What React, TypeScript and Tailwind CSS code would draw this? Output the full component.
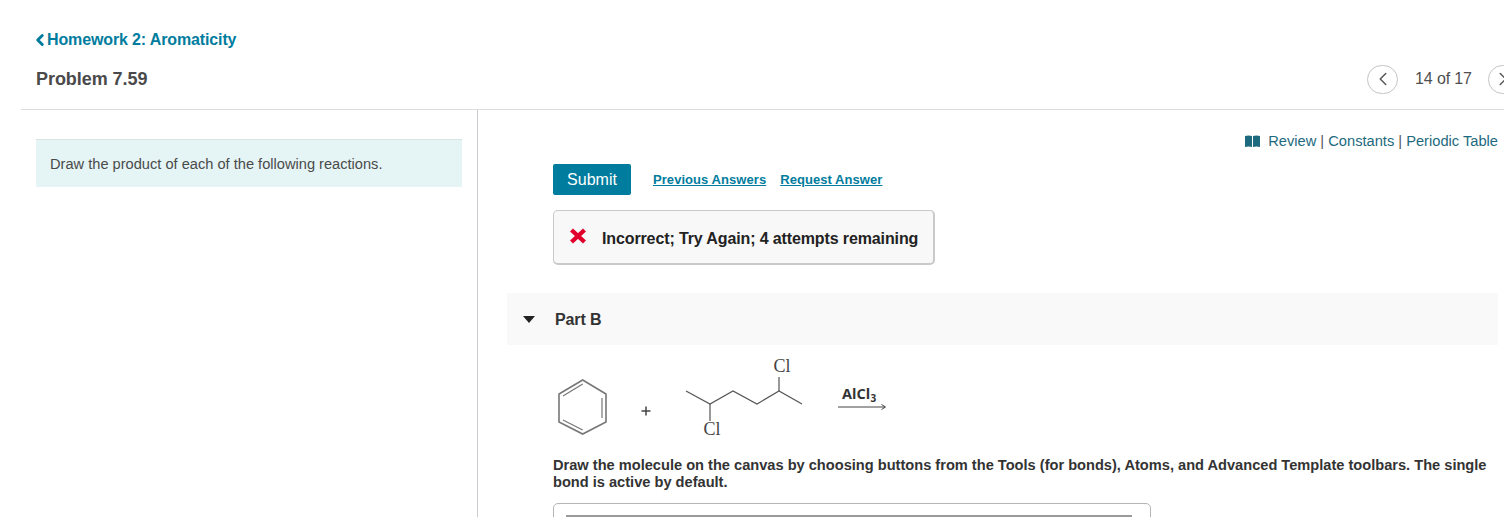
import { ChevronLeft, ChevronRight } from "lucide-react";

function Reaction() {
    return (
        <svg width="340" height="88" viewBox="553 352 340 88" className="block" fill="none">
            {/* benzene */}
            <g stroke="#777" strokeWidth="1.6">
                <path d="M582.7 380 L606 394 L606 422 L582.7 434 L559 422 L559 394 Z" />
                <path d="M602 398 L602 418 M563 396 L582.7 384 M563 420 L582.7 430" strokeWidth="1.2" />
            </g>
            <path d="M646 406.5 V415.5 M641.5 411 H650.5" stroke="#444" strokeWidth="1.5" />
            {/* dichlorohexane */}
            <g stroke="#555" strokeWidth="1.2">
                <path d="M686 391 L710 404 L733 391 L757 404 L779 391 L802 404" />
                <path d="M710 404 V421 M779 391 V377" />
            </g>
            <text x="782" y="372" textAnchor="middle" fontFamily="'Liberation Serif', serif" fontSize="18" fill="#444">Cl</text>
            <text x="712" y="435" textAnchor="middle" fontFamily="'Liberation Serif', serif" fontSize="18" fill="#444">Cl</text>
            <text x="842" y="399" fontFamily="'Open Sans', sans-serif" fontSize="14.5" fontWeight="700" fill="#333">AlCl</text>
            <text x="870.5" y="402" fontFamily="'Open Sans', sans-serif" fontSize="10" fontWeight="700" fill="#333">3</text>
            <path d="M838 407 H885 M881.5 404.5 L885.5 407 L881.5 409.5" stroke="#444" strokeWidth="1" />
        </svg>
    );
}

export default function App() {
    return (
        <div className="w-[1504px] h-[517px] overflow-hidden bg-white font-['Liberation_Sans',Arial,sans-serif]">
            {/* Header */}
            <div className="ml-[21px] border-b border-[#dcdddd] h-[110px] pl-[15px]">
                <a className="flex items-center pt-[29px] h-[50px] text-[16px] leading-[20px] font-bold tracking-[-0.13px] text-[#007c9e]">
                    <ChevronLeft size={18} strokeWidth={4} className="-ml-[5px] -mr-[2px] shrink-0" />
                    Homework 2: Aromaticity
                </a>
                <div className="flex items-center justify-between mt-[14px] h-[30px]">
                    <h1 className="text-[18px] font-bold tracking-[-0.05px] text-[#4a4a4a]">Problem 7.59</h1>
                    <div className="flex items-center text-[16px] tracking-[-0.12px] text-[#4f4f4f] w-[137px] shrink-0">
                        <div className="w-[31px] h-[29px] shrink-0 rounded-full border border-[#c4c4c4] flex items-center justify-center">
                            <ChevronLeft size={22} strokeWidth={1.7} className="text-[#5a5a5a]" />
                        </div>
                        <span className="ml-[17px] whitespace-nowrap">14 of 17</span>
                        <div className="ml-[16px] w-[31px] h-[29px] shrink-0 rounded-full border border-[#c4c4c4] flex items-center justify-center">
                            <ChevronRight size={22} strokeWidth={1.7} className="text-[#5a5a5a]" />
                        </div>
                    </div>
                </div>
            </div>

            <div className="flex">
                {/* Left column */}
                <div className="w-[478px] h-[407px] shrink-0 border-r border-[#c8ccd0] pl-[36px] pr-[15px] pt-[29px]">
                    <div className="h-[48px] bg-[#e5f5f6] border-t border-[#d9e2e3] pl-[14px] pt-[14px] text-[14.63px] leading-[20px] text-[#4a4a4a]">
                        Draw the product of each of the following reactions.
                    </div>
                </div>

                {/* Right column */}
                <div className="flex-1 pl-[29px] pr-[6px]">
                    <div className="flex items-center justify-end gap-[8px] mt-[21px] h-[20px] text-[14.67px] text-[#1d6a7e]">
                        <svg width="15" height="12" viewBox="0 0 15 12" className="shrink-0">
                            <path d="M0 1 Q3.5 0 7 1 V12 Q3.5 11 0 12 Z M8 1 Q11.5 0 15 1 V12 Q11.5 11 8 12 Z" fill="#1d6a7e" />
                        </svg>
                        <span>
                            Review <span className="text-[#555]">|</span> Constants <span className="text-[#555]">|</span> Periodic Table
                        </span>
                    </div>

                    <div className="pl-[46px]">
                        <div className="flex items-center mt-[13px]">
                            <button className="w-[78px] h-[31px] bg-[#007c9e] text-white text-[16px] rounded-[2px]">Submit</button>
                            <a className="ml-[22px] text-[13px] font-bold tracking-[0.06px] underline text-[#007c9e]">Previous Answers</a>
                            <a className="ml-[14px] text-[13px] font-bold tracking-[0.06px] underline text-[#007c9e]">Request Answer</a>
                        </div>

                        <div className="mt-[15px] w-[382px] h-[55px] flex items-center bg-[#f8f8f8] border border-[#c9c9c9] border-b-2 border-r-2 rounded-[5px] pl-[15px]">
                            <svg width="18" height="16" viewBox="0 0 18 16" className="shrink-0 -mt-[3px]">
                                <path d="M2.5 2 L15.5 14 M15.5 2 L2.5 14" stroke="#e0002b" strokeWidth="4.4" />
                            </svg>
                            <span className="ml-[15px] pt-[4px] text-[16px] font-bold tracking-[-0.12px] text-[#222] whitespace-nowrap">Incorrect; Try Again; 4 attempts remaining</span>
                        </div>
                    </div>

                    <div className="mt-[28px] h-[52px] bg-[#f9f9f9] flex items-center pl-[16px]">
                        <div className="w-0 h-0 border-x-[6px] border-x-transparent border-t-[7px] border-t-[#222]" />
                        <span className="ml-[20px] pt-[2px] text-[16px] font-bold tracking-[-0.1px] text-[#333]">Part B</span>
                    </div>

                    <div className="pl-[46px]">
                        <div className="mt-[7px]">
                            <Reaction />
                        </div>
                        <p className="mt-[17px] text-[14.61px] leading-[17px] font-bold text-[#333]">
                            Draw the molecule on the canvas by choosing buttons from the Tools (for bonds), Atoms, and Advanced Template toolbars. The single bond is active by default.
                        </p>
                        <div className="mt-[12px] w-[598px] h-[40px] border border-[#b5b5b5] rounded-[5px] pl-[12px] pr-[18px] pt-[11px]">
                            <div className="h-[2px] bg-[#9a9a9a]" />
                        </div>
                    </div>
                </div>
            </div>
        </div>
    );
}
